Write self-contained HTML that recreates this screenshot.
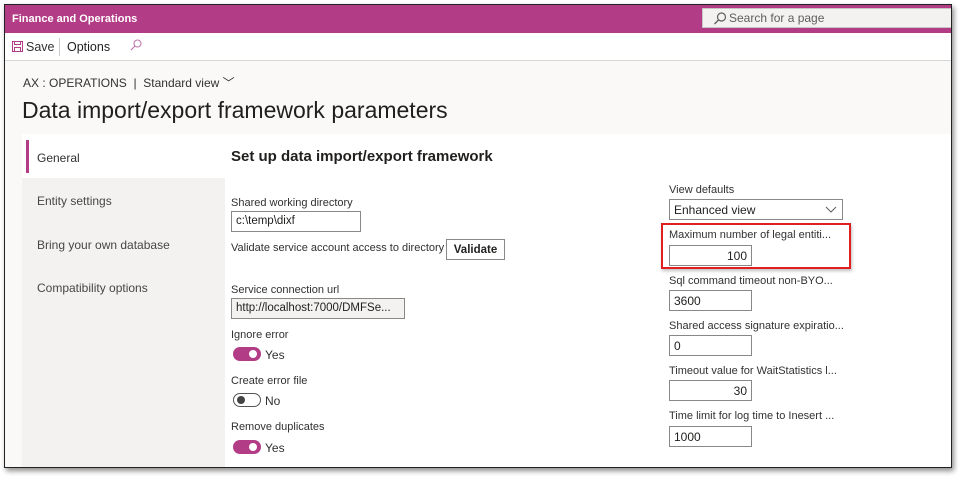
<!DOCTYPE html>
<html><head><style>
*{margin:0;padding:0;box-sizing:border-box}
body{width:964px;height:481px;background:#fff;font-family:"Liberation Sans",sans-serif;position:relative;overflow:hidden;color:#323130}
.frame{position:absolute;left:4px;top:4px;width:948px;height:464px;border:1px solid #222;background:#faf9f8;overflow:hidden;box-shadow:2px 3px 5px rgba(0,0,0,.45)}
.hdr{position:absolute;left:0;top:0;width:100%;height:28px;background:#b33c87;color:#fff;font-size:11px;font-weight:bold}
.tb{position:absolute;left:0;top:28px;width:100%;height:28px;background:#fff;border-bottom:1px solid #d6d6d6;font-size:12.5px}
.a{position:absolute;white-space:nowrap}
.lbl{font-size:11px;color:#323130}
.inp{position:absolute;height:21px;border:1px solid #8a8886;background:#fff;font-size:11.5px;padding:3px 4px;white-space:nowrap;color:#201f1e}
.tog{position:absolute;width:28px;height:14px;border-radius:7px}
.tog i{position:absolute;top:3px;width:8px;height:8px;border-radius:50%}
</style></head><body>
<div class="frame">
<div class="hdr"><span class="a" style="left:7px;top:8px">Finance and Operations</span>
<div class="a" style="left:697px;top:3px;width:252px;height:20px;background:#f3f2f1;border:1px solid #c8c6c4;color:#605e5c;font-weight:normal;font-size:12px;padding:2px 0 0 26px">Search for a page
<svg style="position:absolute;left:10px;top:3px" width="14" height="13" viewBox="0 0 14 13"><circle cx="8.5" cy="5" r="4" fill="none" stroke="#605e5c" stroke-width="1.2"/><path d="M5.5 8L1.5 12" stroke="#605e5c" stroke-width="1.3"/></svg></div></div>
<div class="tb">
<svg class="a" style="left:7px;top:8px" width="11" height="11" viewBox="0 0 11 11"><rect x=".5" y=".5" width="10" height="10" fill="none" stroke="#b33c87"/><rect x="2.5" y=".5" width="6" height="3" fill="none" stroke="#b33c87"/><rect x="2.5" y="6.5" width="6" height="4" fill="none" stroke="#b33c87"/></svg>
<span class="a" style="left:21px;top:7px">Save</span>
<span class="a" style="left:54px;top:5px;width:1px;height:18px;background:#ccc"></span>
<span class="a" style="left:62px;top:7px;color:#201f1e">Options</span>
<svg class="a" style="left:125px;top:6px" width="12" height="12" viewBox="0 0 12 12"><circle cx="7.5" cy="4.5" r="3.5" fill="none" stroke="#c07ab0" stroke-width="1.1"/><path d="M5 7L1 11" stroke="#c07ab0" stroke-width="1.2"/></svg>
</div>
<span class="a" style="left:18px;top:69px;font-size:12px;color:#323130">AX : OPERATIONS &nbsp;|&nbsp; Standard view ﹀</span>
<span class="a" style="left:17px;top:92px;font-size:23px;color:#201f1e">Data import/export framework parameters</span>
<div class="a" style="left:17px;top:129px;width:203px;height:340px;background:#f3f2f1"></div>
<div class="a" style="left:17px;top:129px;width:203px;height:44px;background:#fff"></div>
<div class="a" style="left:21px;top:135px;width:3px;height:33px;background:#b33c87"></div>
<div class="a" style="left:220px;top:129px;width:730px;height:340px;background:#fff"></div>
<span class="a" style="left:32px;top:146px;font-size:12px">General</span>
<span class="a" style="left:32px;top:189px;font-size:12px;color:#484644">Entity settings</span>
<span class="a" style="left:32px;top:233px;font-size:12px;color:#484644">Bring your own database</span>
<span class="a" style="left:32px;top:276px;font-size:12px;color:#484644">Compatibility options</span>
<span class="a" style="left:226px;top:143px;font-size:15px;font-weight:bold;color:#201f1e">Set up data import/export framework</span>
<span class="a lbl" style="left:226px;top:192px">Shared working directory</span>
<div class="inp" style="left:226px;top:206px;width:130px">c:\temp\dixf</div>
<span class="a lbl" style="left:226px;top:237px">Validate service account access to directory</span>
<div class="inp" style="left:441px;top:234px;width:59px;font-weight:bold;text-align:center;padding-top:4px">Validate</div>
<span class="a lbl" style="left:226px;top:279px">Service connection url</span>
<div class="inp" style="left:226px;top:293px;width:174px;background:#f3f2f1">http://localhost:7000/DMFSe...</div>
<span class="a lbl" style="left:226px;top:324px">Ignore error</span>
<div class="tog" style="left:228px;top:342px;background:#b33c87"><i style="left:16px;background:#fff"></i></div><span class="a lbl" style="left:260px;top:343px;font-size:12px">Yes</span>
<span class="a lbl" style="left:226px;top:370px">Create error file</span>
<div class="tog" style="left:228px;top:388px;border:1px solid #555;background:#fff"><i style="left:3px;top:2px;background:#444"></i></div><span class="a lbl" style="left:260px;top:389px;font-size:12px">No</span>
<span class="a lbl" style="left:226px;top:416px">Remove duplicates</span>
<div class="tog" style="left:228px;top:435px;background:#b33c87"><i style="left:16px;background:#fff"></i></div><span class="a lbl" style="left:260px;top:436px;font-size:12px">Yes</span>
<span class="a lbl" style="left:664px;top:179px">View defaults</span>
<div class="inp" style="left:664px;top:194px;width:174px;font-size:12px">Enhanced view<svg style="position:absolute;right:5px;top:6px" width="12" height="7" viewBox="0 0 12 7"><path d="M1 1l5 5 5-5" fill="none" stroke="#605e5c"/></svg></div>
<div class="a" style="left:656px;top:218px;width:190px;height:46px;border:2px solid #e02020;box-shadow:1px 2px 3px rgba(0,0,0,.25)"></div>
<span class="a lbl" style="left:664px;top:224px">Maximum number of legal entiti...</span>
<div class="inp" style="left:664px;top:240px;width:83px;text-align:right;font-size:12px">100</div>
<span class="a lbl" style="left:664px;top:270px">Sql command timeout non-BYO...</span>
<div class="inp" style="left:664px;top:285px;width:83px;font-size:12px">3600</div>
<span class="a lbl" style="left:664px;top:315px">Shared access signature expiratio...</span>
<div class="inp" style="left:664px;top:330px;width:83px;font-size:12px">0</div>
<span class="a lbl" style="left:664px;top:360px">Timeout value for WaitStatistics l...</span>
<div class="inp" style="left:664px;top:375px;width:83px;text-align:right;font-size:12px">30</div>
<span class="a lbl" style="left:664px;top:405px">Time limit for log time to Inesert ...</span>
<div class="inp" style="left:664px;top:421px;width:83px;font-size:12px">1000</div>
</div>
</body></html>
